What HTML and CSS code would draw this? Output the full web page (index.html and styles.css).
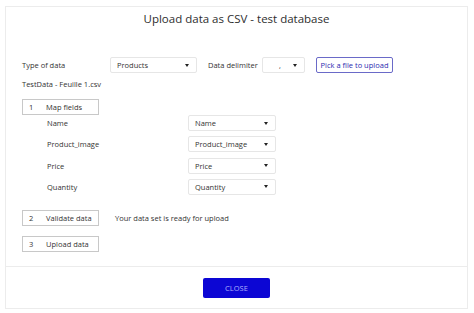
FILE: index.html
```html
<!DOCTYPE html>
<html lang="en">
<head>
    <meta charset="UTF-8">
    <meta name="viewport" content="width=device-width, initial-scale=1.0">
    <title>Upload data as CSV - test database</title>
    <link rel="stylesheet" href="styles.css">
</head>
<body>
    <div class="modal">
        <div class="modal-header">
            <h1>Upload data as CSV - test database</h1>
        </div>

        <div class="modal-body">
            <div class="top-row">
                <span class="label type-label">Type of data</span>
                <div class="select type-select"><span>Products</span><span class="caret"></span></div>
                <span class="label delim-label">Data delimiter</span>
                <div class="select delim-select"><span class="delim-value">,</span><span class="caret"></span></div>
                <button class="pick-btn">Pick a file to upload</button>
            </div>

            <div class="file-name">TestData - Feuille 1.csv</div>

            <div class="step map-step"><span class="step-num">1</span>Map fields</div>

            <div class="fields">
                <div class="field-row">
                    <span class="field-label">Name</span>
                    <div class="select field-select"><span>Name</span><span class="caret"></span></div>
                </div>
                <div class="field-row">
                    <span class="field-label">Product_image</span>
                    <div class="select field-select"><span>Product_image</span><span class="caret"></span></div>
                </div>
                <div class="field-row">
                    <span class="field-label">Price</span>
                    <div class="select field-select"><span>Price</span><span class="caret"></span></div>
                </div>
                <div class="field-row">
                    <span class="field-label">Quantity</span>
                    <div class="select field-select"><span>Quantity</span><span class="caret"></span></div>
                </div>
            </div>

            <div class="step-row validate-row">
                <div class="step"><span class="step-num">2</span>Validate data</div>
                <span class="status">Your data set is ready for upload</span>
            </div>

            <div class="step upload-step"><span class="step-num">3</span>Upload data</div>
        </div>

        <div class="modal-footer">
            <button class="close-btn">CLOSE</button>
        </div>
    </div>
</body>
</html>
```

FILE: styles.css
```css
body {
    margin: 0;
    background-color: #fff;
    font-family: "Open Sans", Arial, sans-serif;
    color: #333;
    font-size: 7.5px;
}
.modal {
    box-sizing: border-box;
    width: 463px;
    height: 303px;
    margin: 6px 0 0 5px;
    border: 1px solid #ececec;
    display: flex;
    flex-direction: column;
}
.modal-header h1 {
    margin: 0;
    padding-top: 2px;
    font-size: 11.5px;
    font-weight: 400;
    line-height: 20px;
    text-align: center;
    color: #2e2e2e;
}
.modal-body {
    flex-grow: 1;
    padding: 28px 0 0 16px;
}
.top-row {
    display: flex;
    align-items: center;
    height: 16px;
}
.label {
    line-height: 16px;
}
.type-label {
    width: 88px;
}
.delim-label {
    width: 54px;
    margin-left: 11px;
}
.select {
    box-sizing: border-box;
    height: 16px;
    display: flex;
    align-items: center;
    justify-content: space-between;
    padding: 0 7px 0 6px;
    border: 1px solid #e6e6e6;
    border-radius: 2px;
    background-color: #fff;
}
.type-select {
    width: 87px;
}
.delim-select {
    width: 43px;
}
.delim-value {
    padding-left: 10px;
}
.caret {
    width: 0;
    height: 0;
    border-left: 2.5px solid transparent;
    border-right: 2.5px solid transparent;
    border-top: 3px solid #222;
}
.pick-btn {
    box-sizing: border-box;
    width: 77px;
    height: 16px;
    margin-left: 11px;
    padding: 0;
    font-family: inherit;
    font-size: 7.5px;
    color: #2b2bb0;
    background-color: #fff;
    border: 1px solid #6a6ac8;
    border-radius: 2px;
}
.file-name {
    margin-top: 6px;
    line-height: 10px;
}
.step {
    box-sizing: border-box;
    width: 77px;
    height: 16px;
    display: flex;
    align-items: center;
    border: 1px solid #c8c8c8;
    background-color: #fff;
}
.step-num {
    width: 17px;
    padding-left: 6px;
}
.map-step {
    margin-top: 10px;
}
.fields {
    padding-left: 25px;
}
.field-row {
    display: flex;
    align-items: center;
    height: 16px;
}
.field-row + .field-row {
    margin-top: 5.3px;
}
.field-label {
    width: 141px;
}
.field-select {
    width: 88px;
}
.step-row {
    display: flex;
    align-items: center;
}
.validate-row {
    margin-top: 15px;
}
.status {
    margin-left: 16px;
}
.upload-step {
    margin-top: 10px;
}
.modal-footer {
    height: 41px;
    border-top: 1px solid #ececec;
    display: flex;
    align-items: center;
    justify-content: center;
}
.close-btn {
    width: 67px;
    height: 20px;
    padding: 0;
    font-family: inherit;
    font-size: 7.5px;
    color: #aeaeff;
    background-color: #0c06d4;
    border: none;
    border-radius: 2px;
}
```
